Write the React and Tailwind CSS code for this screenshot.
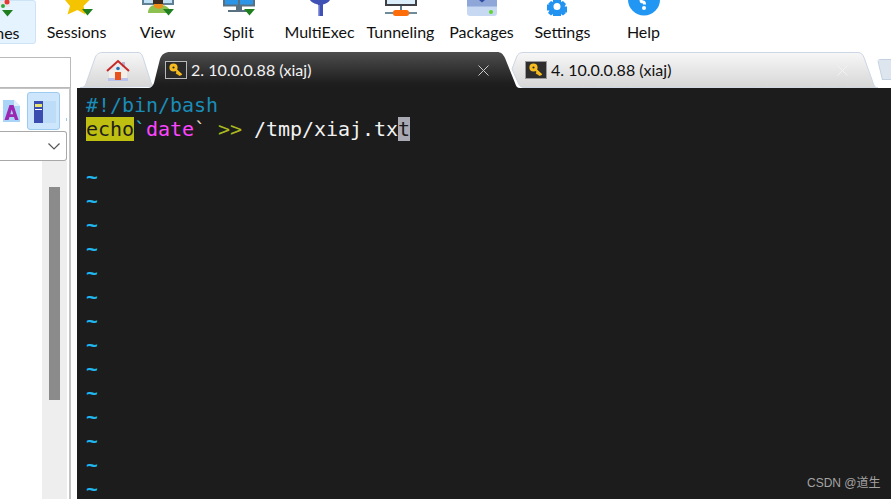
import React from "react";

const Arrow = ({ x }) => <path d={`M${x} 9h11l-5.500 6.500z`} fill="#1f7f1f" />;

const icons = {
  Games: (
    <svg width="40" height="20" viewBox="-24 0 40 20" className="overflow-visible">
      <path d="M-4 0h14v6h-14z" fill="#e8e8ee" />
      <circle cx="7" cy="1" r="2.500" fill="#e53935" />
      <circle cx="3" cy="5" r="2" fill="#2eaa3a" />
      <Arrow x="2" />
    </svg>
  ),
  Sessions: (
    <svg width="40" height="20" viewBox="57 0 40 20">
      <path d="M65 0h24.500l-6 6 2 8.500-8-4.500-10 4.500 2.500-8.500z" fill="#f5c400" />
      <Arrow x="82" />
    </svg>
  ),
  View: (
    <svg width="40" height="20" viewBox="138 0 40 20">
      <path d="M142 0h32v5h-32z" fill="#5f7f92" />
      <path d="M144 0h28v3h-28z" fill="#bfe0f5" />
      <path d="M148 13c0-5 3-8 7-8h6c5 0 9 3 10 8z" fill="#8cc152" />
      <path d="M154 4h9v3l-4 2-5-2z" fill="#ef8c1a" />
      <path d="M153 0h10v4h-10z" fill="#3d2b22" />
      <Arrow x="163" />
    </svg>
  ),
  Split: (
    <svg width="40" height="20" viewBox="219 0 40 20">
      <path d="M223 0h32v6.500h-32z" fill="#58707f" />
      <path d="M225 0h13v4.500h-13zM240 0h13v4.500h-13z" fill="#2d95e8" />
      <path d="M236 6h6v4h-6z" fill="#58707f" />
      <path d="M228 10h22v2h-22z" fill="#58707f" />
      <Arrow x="244" />
    </svg>
  ),
  MultiExec: (
    <svg width="40" height="20" viewBox="300 0 40 20">
      <path d="M310 0h20c-1 2-4 4-7 4.500v11.500h-5v-11.500c-3-.5-7-2.500-8-4.500z" fill="#3f51b5" />
      <path d="M318 5h1.500v11h-1.500z" fill="#8f9bdc" />
    </svg>
  ),
  Tunneling: (
    <svg width="40" height="20" viewBox="381 0 40 20">
      <path d="M385 0h32v6h-32z" fill="#3f3f46" />
      <path d="M387 0h28v4h-28z" fill="#dbeefb" />
      <path d="M400 6h2v6h-2z" fill="#5f7f92" />
      <path d="M385 12h32v2h-32z" fill="#6e8b9b" />
      <rect x="393" y="10" width="16" height="6" rx="2.500" fill="#ff6d0a" />
    </svg>
  ),
  Packages: (
    <svg width="40" height="20" viewBox="462 0 40 20">
      <path d="M467 0h30v13c0 2-1 3-3 3h-24c-2 0-3-1-3-3z" fill="#c6d8f2" />
      <path d="M467 0h30v6.500h-30z" fill="#8ea7d8" />
      <path d="M479 0h6l-3 2.500z" fill="#2f4aa0" />
      <circle cx="491" cy="12" r="2" fill="#5fd62c" />
    </svg>
  ),
  Settings: (
    <svg width="40" height="20" viewBox="537 0 40 20" className="-ml-[12px]">
      <path
        fillRule="evenodd"
        d="M553 0h8v2l2-1 3 3-1.500 2.500H567v6h-2.500L566 13l-3 2.500-2-1.500v2h-8v-2l-2 1.500-3-2.500 1.500-2.500H547v-6h2.500L548 4l3-3 2 1zM557 3a3.500 3.500 0 1 0 0 7 3.500 3.500 0 0 0 0-7z"
        fill="#2393f1"
      />
    </svg>
  ),
  Help: (
    <svg width="40" height="20" viewBox="624 0 40 20">
      <circle cx="644" cy="-0.500" r="16" fill="#2196f3" />
      <path d="M641 0c0 1.500 1 2 2 2s1.500 0 1.500 2.500" stroke="#fff" strokeWidth="3" fill="none" />
      <circle cx="644" cy="8" r="2" fill="#fff" />
    </svg>
  ),
};

const ToolButton = ({ label, active }) => (
  <div
    className={
      active
        ? "-ml-[45px] h-[44px] w-[81px] shrink-0 rounded-[3px] border border-[#cde4f7] bg-[#e5f3ff] flex flex-col items-center"
        : "w-[81px] shrink-0 flex flex-col items-center"
    }
  >
    <div className="h-[20px] w-full flex justify-center">{icons[label]}</div>
    <div className="mt-[1px] text-[16px] leading-[22px] text-[#111] whitespace-nowrap">{label}</div>
  </div>
);

const KeyIcon = ({ dark }) => (
  <div
    className={
      dark
        ? "w-[22px] h-[18px] border border-[#b8b8b8] bg-[#2a2a2a] flex items-center justify-center shrink-0"
        : "w-[22px] h-[18px] border border-[#9a9a9a] bg-[#2e2e2e] flex items-center justify-center shrink-0"
    }
  >
    <svg width="14" height="14" viewBox="0 0 14 14">
      <circle cx="4.500" cy="4.500" r="2.600" fill="none" stroke="#f8bd1e" strokeWidth="3" />
      <path d="M6.500 6.500l6 5.500M9 9l-1.500 2M11 10.500l-1.300 1.800" stroke="#f8bd1e" strokeWidth="2.200" fill="none" />
    </svg>
  </div>
);

const TabShape = ({ w, d, fill, stroke }) => (
  <svg className="absolute inset-0" width={w} height="36" viewBox={`0 0 ${w} 36`}>
    <path d={d} fill={fill} stroke={stroke} />
  </svg>
);

const Tabs = () => (
  <div className="flex">
    <svg width="0" height="0" className="absolute">
      <defs>
        <linearGradient id="gdark" x1="0" y1="0" x2="0" y2="1">
          <stop offset="0" stopColor="#4d4d4d" />
          <stop offset="0.85" stopColor="#1f1f1f" />
          <stop offset="1" stopColor="#1c1c1c" />
        </linearGradient>
        <linearGradient id="glight" x1="0" y1="0" x2="0" y2="1">
          <stop offset="0" stopColor="#f7f7f7" />
          <stop offset="1" stopColor="#d6d6d6" />
        </linearGradient>
      </defs>
    </svg>
    {/* home */}
    <div className="relative w-[78px] h-[36px] ml-[9px] shrink-0 flex items-center">
      <TabShape
        w={78}
        d="M0 35.500c3 0 5-1 6-4L15 6c1-3 3-5.500 8-5.500h35c3 0 4 2 5 5l8 25c1 3 3 4 6 4z"
        fill="url(#glight)"
        stroke="#ccd6e4"
      />
      <svg width="24" height="23" viewBox="0 0 24 23" className="relative ml-[26px]">
        <path d="M16 3h3v5h-3z" fill="#b9b6d8" />
        <path d="M3 11h18v8H3z" fill="#f3eee8" />
        <path d="M2 19h20v3H2z" fill="#b9c2ea" />
        <path d="M9 13h6v8H9z" fill="#e8501c" />
        <circle cx="12" cy="9.500" r="1.800" fill="#2672b5" />
        <path d="M1 12L12 2l11 10" fill="none" stroke="#c62828" strokeWidth="2" />
      </svg>
    </div>
    {/* active */}
    <div className="relative z-10 w-[372px] h-[36px] -ml-[10px] shrink-0 flex items-center text-white">
      <TabShape
        w={372}
        d="M0 36c3 0 5-2 6-5l6-24c2-5 5-7 10-7h327c4 0 6 2 8 6l10 25c1 3 2 5 5 5z"
        fill="url(#gdark)"
        stroke="none"
      />
      <div className="relative ml-[17px]">
        <KeyIcon dark />
      </div>
      <span className="relative ml-[4px] -mt-[1px] text-[16px] text-[#f2f2f2] whitespace-nowrap">2. 10.0.0.88 (xiaj)</span>
      <svg width="11" height="11" viewBox="0 0 11 11" className="relative ml-[167px]">
        <path d="M.5.5l10 10M10.500.5l-10 10" stroke="#c9c9c9" strokeWidth="1" />
      </svg>
    </div>
    {/* inactive */}
    <div className="relative w-[368px] h-[36px] -ml-[10px] shrink-0 flex items-center">
      <TabShape
        w={368}
        d="M14 35.500c-3 0-5-2-6-5L2 17l5-13c1-2 3-3.500 6-3.500h335c3 0 5 2 6 5l9 25c1 3 2 5.500 5 5.500z"
        fill="url(#glight)"
        stroke="#ccd6e4"
      />
      <div className="relative ml-[15px]">
        <KeyIcon />
      </div>
      <span className="relative ml-[4px] -mt-[1px] text-[16px] text-[#111] whitespace-nowrap">4. 10.0.0.88 (xiaj)</span>
      <svg width="11" height="11" viewBox="0 0 11 11" className="relative ml-[166px]">
        <path d="M.5.5l10 10M10.500.5l-10 10" stroke="#f2f2f2" strokeWidth="1" />
      </svg>
    </div>
    {/* new tab stub */}
    <div className="-ml-[1px] mt-[7px] h-[21px] w-[20px] shrink-0 rounded-[4px] bg-[#c3d0e0] [clip-path:polygon(0_0,100%_0,100%_100%,25%_100%)]">
      <div className="h-[19px] mt-[1px] ml-[1px] bg-[#dde5ee] [clip-path:polygon(0_0,100%_0,100%_100%,25%_100%)]" />
    </div>
  </div>
);

const Tilde = () => <div className="h-[24px] pt-[2px] text-[#1fb6ee] font-bold font-['Liberation_Mono',monospace]">~</div>;

export default function App() {
  const tildes = Array.from({ length: 14 });
  return (
    <div className="relative w-[891px] h-[499px] overflow-hidden bg-white flex flex-col font-['Lato',sans-serif]">
      <div className="h-[52px] shrink-0 flex">
        <ToolButton label="Games" active />
        {["Sessions", "View", "Split", "MultiExec", "Tunneling", "Packages", "Settings", "Help"].map((l) => (
          <ToolButton key={l} label={l} />
        ))}
      </div>
      <div className="h-[36px] shrink-0 flex">
        <div className="w-[71px] h-[31px] mt-[5px] shrink-0 border border-l-0 border-[#b9b9b9] bg-white" />
        <Tabs />
      </div>
      <div className="flex-1 min-h-0 flex">
        <div className="w-[77px] shrink-0 flex bg-white">
          <div className="w-[71px] border-t border-r-2 border-[#c4c4c4] flex flex-col">
            <div className="h-[42px] pt-[3px] flex items-start">
              <svg width="17" height="22" viewBox="0 0 17 22" className="ml-[3px] mt-[8px]">
                <path d="M0 0h11l6 6v16H0z" fill="#a9d3f7" />
                <path d="M11 0l6 6h-6z" fill="#e0effc" />
                <path d="M6.500 5h4L15.500 20h-3.500l-1-3H6.500l-1 3H1.500zM7.300 14.300h2.900L8.700 9.500z" fill="#9c27b0" fillRule="evenodd" />
              </svg>
              <div className="ml-[7px] h-[38px] w-[33px] rounded-[3px] border border-[#9ccbf2] bg-[#cde6fb] flex">
                <div className="ml-[6px] mt-[8px] h-[22px] w-[9px] bg-[#3b4cb0]">
                  <div className="h-[3px] mt-[3px] w-[7px] ml-[1px] bg-[#e9e36a]" />
                  <div className="h-[1px] mt-[2px] w-[7px] ml-[1px] bg-white" />
                </div>
                <div className="mt-[8px] h-[22px] w-[13px] bg-[#bcdcf8]" />
              </div>
              <div className="ml-[6px] mt-[26px] h-[3px] w-[1px] bg-[#9ccbf2]" />
            </div>
            <div className="h-[30px] w-[67px] shrink-0 rounded-r-[3px] border border-l-0 border-[#a8a8a8] bg-white flex items-center justify-end pr-[6px]">
              <svg width="12" height="7" viewBox="0 0 12 7">
                <path d="M.5.5L6 6l5.500-5.500" fill="none" stroke="#555" strokeWidth="1.200" />
              </svg>
            </div>
            <div className="flex-1 flex">
              <div className="w-[42px]" />
              <div className="w-[25px] bg-[#eeeeee] pl-[7px] pt-[26px]">
                <div className="w-[11px] h-[213px] bg-[#8b8b8b]" />
              </div>
            </div>
          </div>
        </div>
        <div className="flex-1 bg-[#1c1c1c] pl-[9px] pt-[5px] text-[20px] leading-[24px] tracking-[-0.04px] font-['DejaVu_Sans_Mono',monospace] whitespace-pre overflow-hidden">
          <div className="h-[24px] text-[#1a8cb8]">#!/bin/bash</div>
          <div className="h-[24px] text-[#f2f2f2]">
            <span className="bg-[#bfbf12] text-[#1c1c1c]">echo</span>
            <span className="text-[#2fb4c8]">`</span>
            <span className="text-[#ff45ff]">date</span>
            <span className="text-[#e8dfc0]">`</span>
            <span> </span>
            <span className="text-[#a9b81e]">&gt;&gt;</span>
            <span> /tmp/xiaj.tx</span>
            <span className="bg-[#a9a9b4] text-[#1c1c1c]">t</span>
          </div>
          <div className="h-[24px]" />
          {tildes.map((_, i) => (
            <Tilde key={i} />
          ))}
        </div>
      </div>
      <div className="absolute left-[807px] top-[475px] text-[12px] leading-[16px] text-[#a3a3a3] whitespace-nowrap font-['Liberation_Sans','Noto_Sans_CJK_SC',sans-serif]">
        CSDN @道生
      </div>
    </div>
  );
}
